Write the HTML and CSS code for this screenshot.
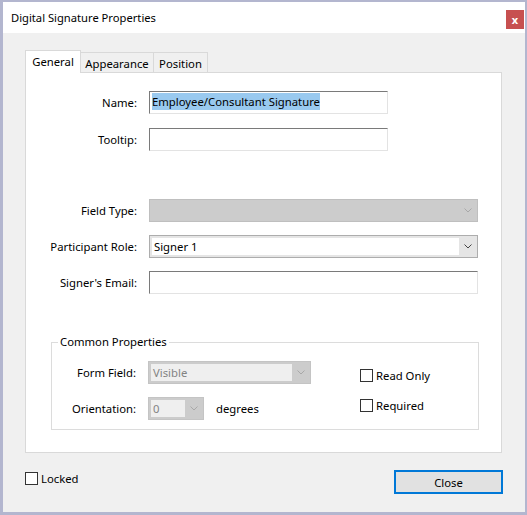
FILE: index.html
```html
<!DOCTYPE html>
<html>
<head>
<meta charset="utf-8">
<title>Digital Signature Properties</title>
<link rel="stylesheet" href="styles.css">
</head>
<body>
<div class="dialog">
  <div class="titlebar">
    <span class="title">Digital Signature Properties</span>
    <span class="close">x</span>
  </div>
  <div class="content">
    <div class="tabs">
      <div class="tab active t-general">General</div>
      <div class="tab t-appearance">Appearance</div>
      <div class="tab t-position">Position</div>
    </div>
    <div class="panel">
      <div class="form">
        <div class="row">
          <span class="lbl">Name:</span>
          <div class="input short"><span class="sel">Employee/Consultant Signature</span></div>
        </div>
        <div class="row r-tip">
          <span class="lbl">Tooltip:</span>
          <div class="input short"></div>
        </div>
        <div class="row r-gap">
          <span class="lbl">Field Type:</span>
          <div class="combo flat long">
            <div class="btn"><svg class="chev light" width="8" height="5" viewBox="0 0 8 5"><polyline points="0.5,0.5 4,4 7.5,0.5"/></svg></div>
          </div>
        </div>
        <div class="row">
          <span class="lbl">Participant Role:</span>
          <div class="combo long">
            <div class="field">Signer 1</div>
            <div class="btn"><svg class="chev" width="8" height="5" viewBox="0 0 8 5"><polyline points="0.5,0.5 4,4 7.5,0.5"/></svg></div>
          </div>
        </div>
        <div class="row">
          <span class="lbl">Signer's Email:</span>
          <div class="input long"></div>
        </div>
      </div>
      <fieldset class="group">
        <legend>Common Properties</legend>
        <div class="group-body">
          <div class="gfields">
            <span class="glbl">Form Field:</span>
            <div class="combo disabled w162">
              <div class="field">Visible</div>
              <div class="btn"><svg class="chev light" width="8" height="5" viewBox="0 0 8 5"><polyline points="0.5,0.5 4,4 7.5,0.5"/></svg></div>
            </div>
            <span class="glbl">Orientation:</span>
            <div class="orient">
              <div class="combo disabled w55">
                <div class="field">0</div>
                <div class="btn"><svg class="chev light" width="8" height="5" viewBox="0 0 8 5"><polyline points="0.5,0.5 4,4 7.5,0.5"/></svg></div>
              </div>
              <span>degrees</span>
            </div>
          </div>
          <div class="gchecks">
            <div class="check"><span class="box"></span><span>Read Only</span></div>
            <div class="check"><span class="box"></span><span>Required</span></div>
          </div>
        </div>
      </fieldset>
    </div>
    <div class="footer">
      <div class="check locked"><span class="box"></span><span>Locked</span></div>
      <div class="button">Close</div>
    </div>
  </div>
</div>
</body>
</html>
```
FILE: styles.css
```css
html, body {
  margin: 0;
}
body {
  background: #b3b6cf;
  padding: 2px 0 0 3px;
  height: 515px;
  box-sizing: border-box;
  overflow: hidden;
  font-family: "Noto Sans", "Open Sans", sans-serif;
  font-size: 11.3px;
  color: #000;
}
.dialog {
  width: 522px;
  height: 510px;
  background: #f0f0f0;
  display: flex;
  flex-direction: column;
}
.titlebar {
  height: 31px;
  flex: none;
  background: #fff;
  display: flex;
  justify-content: space-between;
  align-items: flex-start;
}
.title {
  padding-left: 8px;
  line-height: 31px;
  font-size: 11.2px;
}
.close {
  width: 18px;
  height: 19px;
  margin: 8px 1px 0 0;
  background: #c75050;
  color: #fff;
  font-weight: bold;
  font-size: 11px;
  line-height: 1;
  display: flex;
  align-items: center;
  justify-content: center;
}
.content {
  padding: 17px 0 0 22px;
}
.tabs {
  display: flex;
  align-items: flex-end;
  height: 22px;
}
.tab {
  height: 20px;
  box-sizing: border-box;
  border: 1px solid #d9d9d9;
  border-bottom: none;
  background: #f0f0f0;
  display: flex;
  align-items: center;
  justify-content: center;
  margin-left: -1px;
  padding-top: 1px;
}
.tab.active {
  height: 23px;
  margin-bottom: -1px;
  margin-left: 0;
  background: #fff;
  position: relative;
  z-index: 1;
  padding: 0 0 2px 0;
}
.t-general { width: 56px; }
.t-appearance { width: 74px; }
.t-position { width: 55px; }
.panel {
  width: 477px;
  height: 381px;
  box-sizing: border-box;
  border: 1px solid #d9d9d9;
  background: #fff;
}
.form {
  padding-top: 18px;
  display: flex;
  flex-direction: column;
  gap: 13px;
}
.row {
  display: flex;
  align-items: center;
  height: 23px;
}
.r-tip { margin-top: 1px; }
.r-gap { margin-top: 35px; }
.lbl {
  width: 111px;
  flex: none;
  text-align: right;
  margin-right: 12px;
}
.input {
  height: 23px;
  box-sizing: border-box;
  background: #fff;
  border: 1px solid #e3e3e3;
  border-top-color: #7a7a7a;
  border-left-color: #7a7a7a;
  padding: 1px 2px;
}
.sel {
  display: inline-block;
  background: #99c9ef;
  line-height: 17px;
}
.short { width: 239px; }
.long { width: 329px; }
.combo {
  height: 23px;
  box-sizing: border-box;
  border: 1px solid #adadad;
  background: #e5e5e5;
  padding: 2px 0 2px 2px;
  display: flex;
}
.combo .field {
  flex: 1;
  background: #fff;
  padding-left: 2px;
  display: flex;
  align-items: center;
}
.combo .btn {
  width: 18px;
  flex: none;
  display: flex;
  align-items: center;
  justify-content: center;
}
.combo.flat {
  background: #cccccc;
  border-color: #bfbfbf;
  justify-content: flex-end;
}
.combo.disabled {
  background: #cccccc;
  border-color: #c4c4c4;
}
.combo.disabled .field {
  background: #efefef;
  color: #838383;
}
.chev polyline {
  fill: none;
  stroke: #444;
  stroke-width: 1;
}
.chev.light polyline {
  stroke: #a8a8a8;
}
.group {
  margin: 40px 0 0 25px;
  width: 428px;
  box-sizing: border-box;
  border: 1px solid #dcdcdc;
  padding: 0 0 9px 0;
  min-width: 0;
}
.group legend {
  margin-left: 6px;
  padding: 0 2px;
  line-height: 16px;
}
.group-body {
  display: flex;
  padding-top: 11px;
}
.gfields {
  display: grid;
  grid-template-columns: 84px auto;
  column-gap: 12px;
  row-gap: 13px;
  align-items: center;
}
.glbl { text-align: right; }
.w162 { width: 163px; }
.w55 { width: 56px; }
.orient {
  display: flex;
  align-items: center;
  gap: 12px;
}
.gchecks {
  display: flex;
  flex-direction: column;
  gap: 17px;
  margin-left: 49px;
  padding-top: 8px;
}
.check {
  display: flex;
  align-items: center;
  gap: 3px;
  height: 13px;
}
.box {
  width: 13px;
  height: 13px;
  box-sizing: border-box;
  border: 1px solid #333;
  background: #fff;
  flex: none;
}
.footer {
  width: 478px;
  margin-top: 17px;
  display: flex;
  justify-content: space-between;
  align-items: flex-start;
}
.locked { margin-top: 2px; }
.button {
  width: 109px;
  height: 24px;
  box-sizing: border-box;
  border: 2px solid #0078d7;
  background: #e1e1e1;
  display: flex;
  align-items: center;
  justify-content: center;
}
```
